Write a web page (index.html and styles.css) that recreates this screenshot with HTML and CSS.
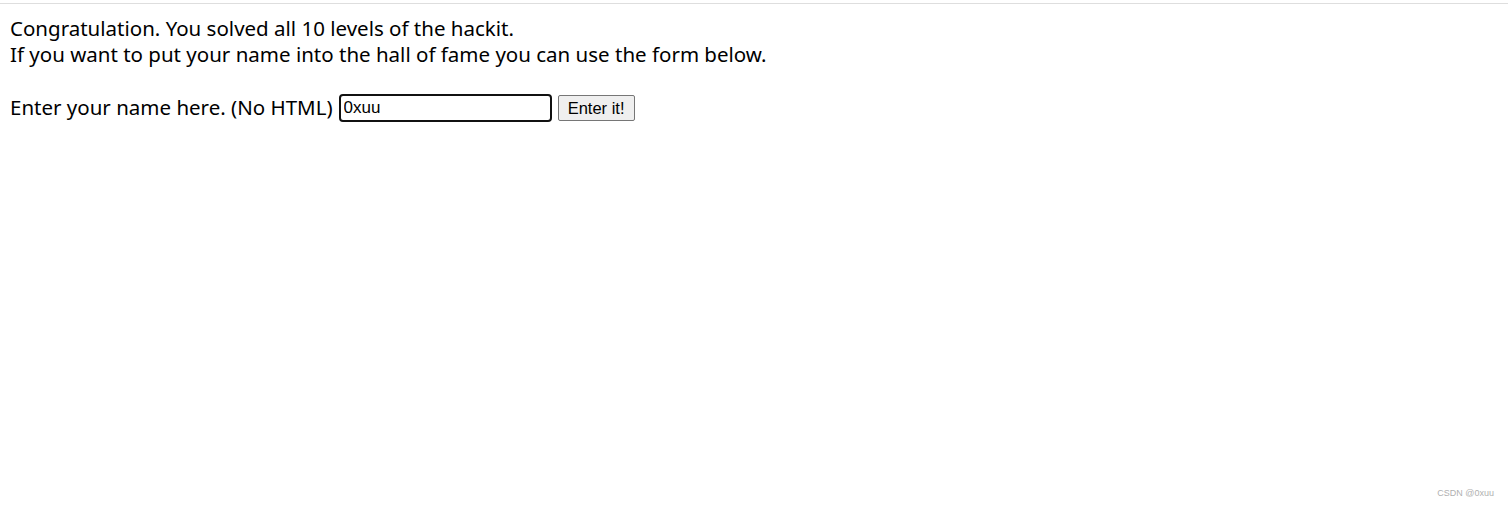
FILE: index.html
```html
<!DOCTYPE html>
<html>
<head>
<meta charset="utf-8">
<link rel="stylesheet" href="styles.css">
</head>
<body>
<div class="topline"></div>
<div class="content">
  <p class="msg">Congratulation. You solved all 10 levels of the hackit.<br>If you want to put your name into the hall of fame you can use the form below.</p>
  <form class="form">
    <label class="label" for="name">Enter your name here. (No HTML)</label>
    <input id="name" class="name" type="text" value="0xuu">
    <button type="button" class="btn">Enter it!</button>
  </form>
</div>
<div class="watermark">CSDN @0xuu</div>
</body>
</html>
```
FILE: styles.css
```css
html, body {
  margin: 0;
  padding: 0;
  background: #fff;
  height: 100%;
}
body {
  font-family: "Noto Sans", "Open Sans", sans-serif;
  color: #000;
  position: relative;
  overflow: hidden;
}
.topline {
  margin-top: 3px;
  height: 1px;
  background: #dedede;
}
.content {
  padding: 11px 10px 0 10px;
}
.msg {
  margin: 0;
  font-size: 20.5px;
  line-height: 26px;
}
.form {
  margin-top: 27px;
  display: flex;
  align-items: center;
}
.label {
  font-size: 20.5px;
  line-height: 26px;
  margin-bottom: 2px;
}
.name {
  box-sizing: border-box;
  margin-left: 6px;
  width: 213px;
  height: 28px;
  border: 2px solid #111;
  border-radius: 4px;
  padding: 0 3px;
  font-family: "Liberation Sans", Arial, sans-serif;
  font-size: 17px;
  outline: none;
  color: #000;
}
.btn {
  box-sizing: border-box;
  margin-left: 6px;
  width: 77px;
  height: 26px;
  border: 1px solid #767676;
  border-radius: 2px;
  background: #efefef;
  font-family: "Liberation Sans", Arial, sans-serif;
  font-size: 16.5px;
  color: #000;
  padding: 0;
}
.watermark {
  position: absolute;
  right: 14px;
  bottom: 9px;
  font-family: "Liberation Sans", Arial, sans-serif;
  font-size: 9px;
  color: #b0b0b0;
}
```
